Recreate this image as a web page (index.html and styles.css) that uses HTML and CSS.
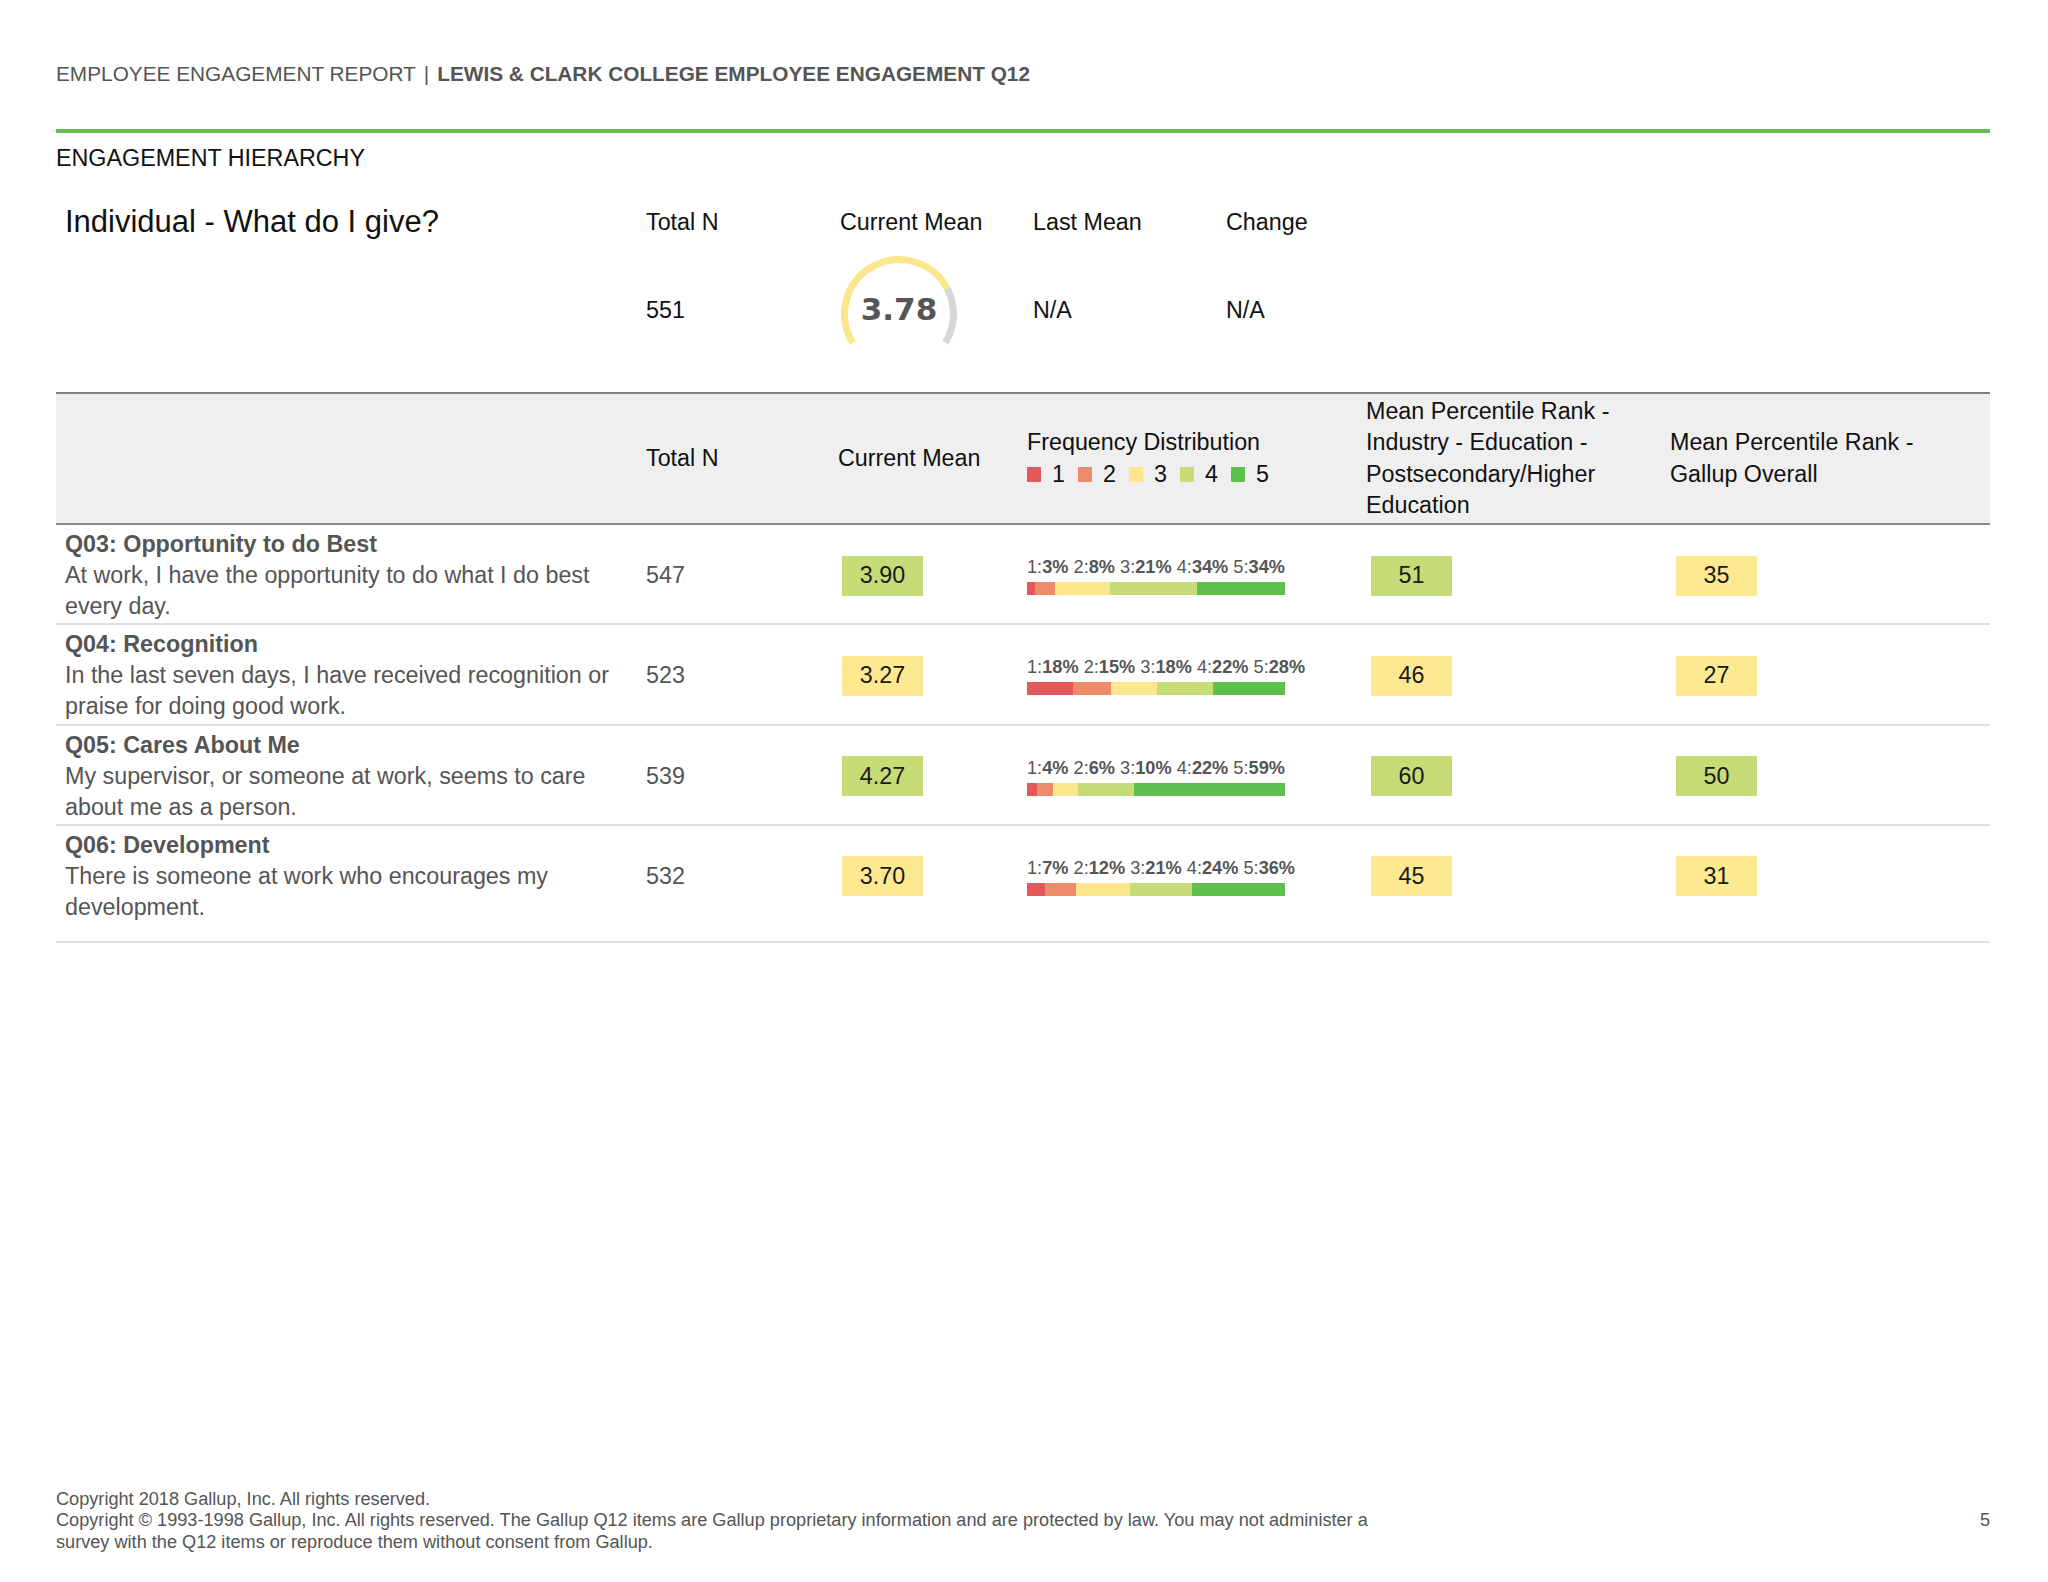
FILE: index.html
```html
<!DOCTYPE html>
<html>
<head>
<meta charset="utf-8">
<link rel="stylesheet" href="styles.css">
</head>
<body>
<div class="page">
  <div class="top">EMPLOYEE ENGAGEMENT REPORT<span class="sep">|</span><b>LEWIS &amp; CLARK COLLEGE EMPLOYEE ENGAGEMENT Q12</b></div>
  <div class="rule"></div>
  <h2 class="section">ENGAGEMENT HIERARCHY</h2>

  <section class="summary">
    <div class="s-title">Individual - What do I give?</div>
    <div class="s-label">Total N</div>
    <div class="s-label">Current Mean</div>
    <div class="s-label">Last Mean</div>
    <div class="s-label">Change</div>
    <div></div>
    <div class="s-val">551</div>
    <div class="gauge">
      <svg width="120" height="120" viewBox="0 0 120 120">
        <path d="M13.78 88.88 A54.5 54.5 0 1 1 108.33 34.80" fill="none" stroke="#fbe78b" stroke-width="7"/>
        <path d="M108.33 34.80 A54.5 54.5 0 0 1 106.22 88.88" fill="none" stroke="#d7d7d7" stroke-width="7"/>
      </svg>
      <span class="gauge-num">3.78</span>
    </div>
    <div class="s-val">N/A</div>
    <div class="s-val">N/A</div>
  </section>

  <div class="table">
    <div class="thead">
      <div></div>
      <div>Total N</div>
      <div>Current Mean</div>
      <div>
        <div>Frequency Distribution</div>
        <div class="legend">
          <span class="sw c1"></span><span class="ld">1</span>
          <span class="sw c2"></span><span class="ld">2</span>
          <span class="sw c3"></span><span class="ld">3</span>
          <span class="sw c4"></span><span class="ld">4</span>
          <span class="sw c5"></span><span class="ld">5</span>
        </div>
      </div>
      <div class="wrap1">Mean Percentile Rank - Industry - Education - Postsecondary/Higher Education</div>
      <div class="wrap2">Mean Percentile Rank - Gallup Overall</div>
    </div>

    <div class="row">
      <div class="q"><b>Q03: Opportunity to do Best</b><br>At work, I have the opportunity to do what I do best every day.</div>
      <div>547</div>
      <div><span class="badge g">3.90</span></div>
      <div class="freq">
        <div class="fl">1:<b>3%</b> 2:<b>8%</b> 3:<b>21%</b> 4:<b>34%</b> 5:<b>34%</b></div>
        <div class="bar"><span class="c1" style="flex:3"></span><span class="c2" style="flex:8"></span><span class="c3" style="flex:21"></span><span class="c4" style="flex:34"></span><span class="c5" style="flex:34"></span></div>
      </div>
      <div><span class="badge g b2">51</span></div>
      <div><span class="badge y b3">35</span></div>
    </div>

    <div class="row">
      <div class="q"><b>Q04: Recognition</b><br>In the last seven days, I have received recognition or praise for doing good work.</div>
      <div>523</div>
      <div><span class="badge y">3.27</span></div>
      <div class="freq">
        <div class="fl">1:<b>18%</b> 2:<b>15%</b> 3:<b>18%</b> 4:<b>22%</b> 5:<b>28%</b></div>
        <div class="bar"><span class="c1" style="flex:18"></span><span class="c2" style="flex:15"></span><span class="c3" style="flex:18"></span><span class="c4" style="flex:22"></span><span class="c5" style="flex:28"></span></div>
      </div>
      <div><span class="badge y b2">46</span></div>
      <div><span class="badge y b3">27</span></div>
    </div>

    <div class="row">
      <div class="q"><b>Q05: Cares About Me</b><br>My supervisor, or someone at work, seems to care about me as a person.</div>
      <div>539</div>
      <div><span class="badge g">4.27</span></div>
      <div class="freq">
        <div class="fl">1:<b>4%</b> 2:<b>6%</b> 3:<b>10%</b> 4:<b>22%</b> 5:<b>59%</b></div>
        <div class="bar"><span class="c1" style="flex:4"></span><span class="c2" style="flex:6"></span><span class="c3" style="flex:10"></span><span class="c4" style="flex:22"></span><span class="c5" style="flex:59"></span></div>
      </div>
      <div><span class="badge g b2">60</span></div>
      <div><span class="badge g b3">50</span></div>
    </div>

    <div class="row last">
      <div class="q"><b>Q06: Development</b><br>There is someone at work who encourages my development.</div>
      <div>532</div>
      <div><span class="badge y">3.70</span></div>
      <div class="freq">
        <div class="fl">1:<b>7%</b> 2:<b>12%</b> 3:<b>21%</b> 4:<b>24%</b> 5:<b>36%</b></div>
        <div class="bar"><span class="c1" style="flex:7"></span><span class="c2" style="flex:12"></span><span class="c3" style="flex:21"></span><span class="c4" style="flex:24"></span><span class="c5" style="flex:36"></span></div>
      </div>
      <div><span class="badge y b2">45</span></div>
      <div><span class="badge y b3">31</span></div>
    </div>
  </div>

  <footer class="foot">
    <div class="foot-text">Copyright 2018 Gallup, Inc. All rights reserved.<br>Copyright © 1993-1998 Gallup, Inc. All rights reserved. The Gallup Q12 items are Gallup proprietary information and are protected by law. You may not administer a survey with the Q12 items or reproduce them without consent from Gallup.</div>
    <div class="pnum">5</div>
  </footer>
</div>
</body>
</html>
```

FILE: styles.css
```css
html, body {
  margin: 0;
  background: #ffffff;
}
body {
  font-family: "Liberation Sans", Arial, sans-serif;
  color: #111;
}
.page {
  min-height: 1582px;
  box-sizing: border-box;
  padding: 62px 58px 29px 56px;
  display: flex;
  flex-direction: column;
}
.top {
  font-size: 20.8px;
  line-height: 24px;
  color: #555;
}
.top .sep {
  margin: 0 8px;
}
.top b {
  font-weight: bold;
}
.rule {
  height: 4px;
  background: #62bd4a;
  margin-top: 43px;
}
.section {
  font-size: 23.3px;
  font-weight: normal;
  line-height: 28px;
  margin: 11px 0 0;
  color: #111;
}
.summary {
  display: grid;
  grid-template-columns: 590px 194px 193px 193px 1fr;
  grid-template-rows: 32px 120px;
  row-gap: 16px;
  margin-top: 34px;
  font-size: 23.3px;
  line-height: 32px;
  color: #111;
}
.s-title {
  font-size: 31px;
  padding-left: 9px;
  grid-row: 1;
}
.s-val {
  align-self: center;
  padding-bottom: 8px;
}
.gauge {
  display: grid;
  width: 120px;
  height: 120px;
  margin-left: -1px;
}
.gauge svg {
  grid-area: 1 / 1;
  display: block;
}
.gauge-num {
  grid-area: 1 / 1;
  align-self: center;
  justify-self: center;
  font-family: "DejaVu Sans", Verdana, sans-serif;
  font-weight: bold;
  font-size: 31px;
  color: #555;
  padding-bottom: 11px;
  line-height: 36px;
}
.table {
  margin-top: 18px;
  border-top: 2px solid #808080;
}
.thead, .row {
  display: grid;
  grid-template-columns: 590px 192px 189px 339px 304px 1fr;
}
.thead {
  height: 129px;
  align-items: center;
  background: #efeff0;
  border-bottom: 2px solid #8a8a8a;
  font-size: 23.3px;
  line-height: 31.3px;
  color: #111;
}
.wrap1 {
  padding-right: 14px;
}
.wrap2 {
  padding-right: 30px;
}
.legend {
  display: flex;
  align-items: center;
}
.sw {
  width: 14px;
  height: 15px;
  margin-right: 11px;
}
.ld {
  margin-right: 13px;
}
.c1 { background: #e35858; }
.c2 { background: #ee8b6a; }
.c3 { background: #fde78d; }
.c4 { background: #c5dc78; }
.c5 { background: #5fbf4d; }
.row {
  align-items: center;
  padding: 4px 0 1px;
  border-bottom: 2px solid #dfdfe2;
  font-size: 23.3px;
  line-height: 31.1px;
  color: #555;
}
.row.last {
  padding-bottom: 18px;
}
.q {
  padding: 0 25px 0 9px;
}
.q b {
  font-weight: bold;
}
.badge {
  display: flex;
  width: 81px;
  height: 40px;
  margin-left: 4px;
  align-items: center;
  justify-content: center;
  color: #1a1a1a;
  font-size: 23.3px;
}
.badge.b2 { margin-left: 5px; }
.badge.b3 { margin-left: 6px; }
.badge.g { background: #c6dc76; }
.badge.y { background: #fde98f; }
.freq {
  display: flex;
  flex-direction: column;
}
.fl {
  font-size: 18.2px;
  line-height: 22px;
  color: #555;
  white-space: nowrap;
}
.fl b {
  font-weight: bold;
}
.bar {
  display: flex;
  width: 258px;
  height: 13px;
  margin-top: 4px;
}
.foot {
  margin-top: auto;
  display: flex;
  justify-content: space-between;
  align-items: center;
  font-size: 18.15px;
  line-height: 21.5px;
  color: #555;
}
.foot-text {
  max-width: 1350px;
}
```
